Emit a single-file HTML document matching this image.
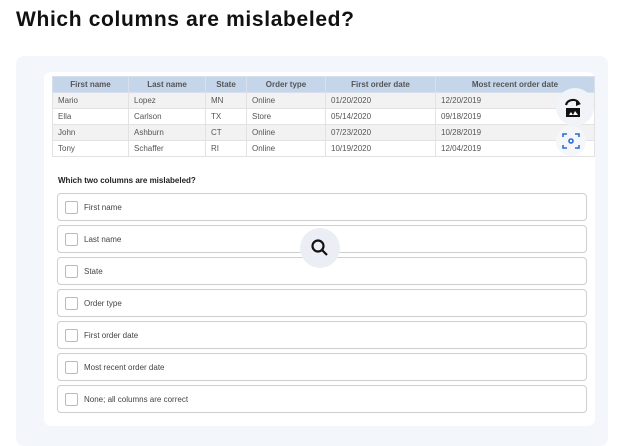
<!DOCTYPE html>
<html><head><style>
*{margin:0;padding:0;box-sizing:border-box}
body{width:622px;height:431px;background:#fff;font-family:"Liberation Sans",sans-serif;position:relative;overflow:hidden}
h1{position:absolute;left:16px;top:8px;font-size:21px;font-weight:bold;color:#111;letter-spacing:0.65px;white-space:nowrap}
.panel{position:absolute;left:16px;top:56px;width:592px;height:390px;background:#f3f6fa;border-radius:8px}
.card{position:absolute;left:44px;top:72px;width:551px;height:354px;background:#fff;border-radius:7px}
table{position:absolute;left:52px;top:76px;border-collapse:collapse;font-size:8px;color:#555}
td,th{height:16px;border:1px solid #e2e2e2;padding:0 5px;text-align:left;font-weight:normal}
th{background:#c5d5ea;font-weight:bold;color:#555;text-align:center;border-color:#d7e0ec}
tr.g td{background:#f2f2f2}
.q{position:absolute;left:58px;top:176px;font-size:8px;font-weight:bold;color:#222}
.opt{position:absolute;left:57px;width:530px;height:28px;border:1px solid #cfcfcf;border-radius:4px;font-size:8px;color:#444}
.opt i{position:absolute;left:7px;top:7px;width:13px;height:13px;border:1px solid #bbb;border-radius:2px}
.opt span{position:absolute;left:26px;top:9px}
.c{position:absolute;border-radius:50%;background:#eef2f7}
</style></head><body>
<h1>Which columns are mislabeled?</h1>
<div class="panel"></div>
<div class="card"></div>
<table>
<tr><th style="width:76px">First name</th><th style="width:77px">Last name</th><th style="width:41px">State</th><th style="width:79px">Order type</th><th style="width:110px">First order date</th><th style="width:159px">Most recent order date</th></tr>
<tr class="g"><td>Mario</td><td>Lopez</td><td>MN</td><td>Online</td><td>01/20/2020</td><td>12/20/2019</td></tr>
<tr><td>Ella</td><td>Carlson</td><td>TX</td><td>Store</td><td>05/14/2020</td><td>09/18/2019</td></tr>
<tr class="g"><td>John</td><td>Ashburn</td><td>CT</td><td>Online</td><td>07/23/2020</td><td>10/28/2019</td></tr>
<tr><td>Tony</td><td>Schaffer</td><td>RI</td><td>Online</td><td>10/19/2020</td><td>12/04/2019</td></tr>
</table>
<div class="c" style="left:556px;top:88px;width:38px;height:38px;background:#f0f3f7"></div>
<svg style="position:absolute;left:562px;top:96px" width="24" height="24" viewBox="0 0 24 24"><path d="M4 9 A7 6 0 0 1 17 7" fill="none" stroke="#111" stroke-width="2.2"/><path d="M14 4 L19 8 L14 10 Z" fill="#111"/><rect x="4" y="12" width="14" height="9" fill="#111"/><path d="M7 19 L9 16 L11 19 Z M11 19 L13 15 L16 19Z" fill="#fff"/></svg>
<div class="c" style="left:556px;top:126px;width:30px;height:30px;background:#f4f6f9"></div>
<svg style="position:absolute;left:562px;top:132px" width="18" height="18" viewBox="0 0 18 18" fill="none" stroke="#2a6fd6" stroke-width="1.6"><path d="M1 5V2h4M13 2h4v3M17 13v3h-4M5 16H1v-3"/><circle cx="9" cy="9" r="2"/></svg>
<div class="q">Which two columns are mislabeled?</div>
<div class="opt" style="top:193px"><i></i><span>First name</span></div>
<div class="opt" style="top:225px"><i></i><span>Last name</span></div>
<div class="opt" style="top:257px"><i></i><span>State</span></div>
<div class="opt" style="top:289px"><i></i><span>Order type</span></div>
<div class="opt" style="top:321px"><i></i><span>First order date</span></div>
<div class="opt" style="top:353px"><i></i><span>Most recent order date</span></div>
<div class="opt" style="top:385px"><i></i><span>None; all columns are correct</span></div>
<div class="c" style="left:300px;top:228px;width:40px;height:40px;background:#ebeff5"></div>
<svg style="position:absolute;left:310px;top:238px" width="20" height="20" viewBox="0 0 20 20" fill="none" stroke="#111" stroke-width="2.2"><circle cx="8" cy="8" r="5.5"/><path d="M12 12l5 5"/></svg>
</body></html>
